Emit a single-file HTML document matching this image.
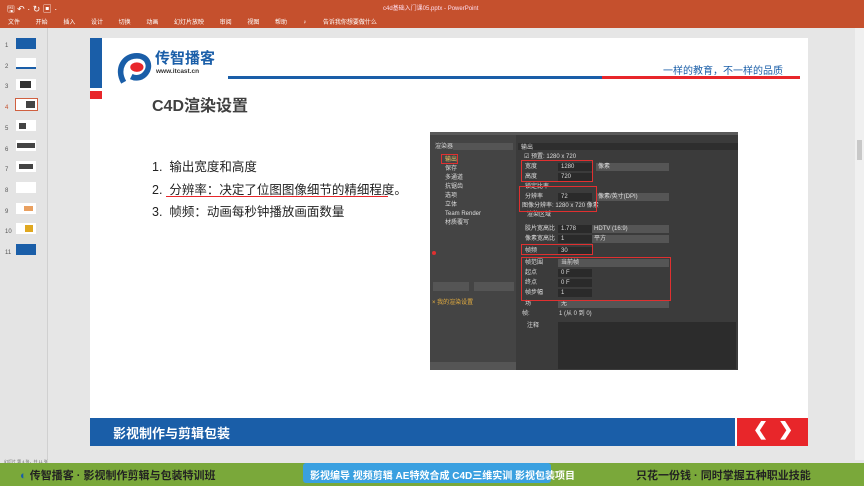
<!DOCTYPE html>
<html><head><meta charset="utf-8"><style>
*{margin:0;padding:0;box-sizing:border-box}
body{width:864px;height:486px;overflow:hidden;position:relative;background:#e6e6e6;font-family:"Liberation Sans","Noto Sans CJK SC",sans-serif}
.a{position:absolute}
.t{white-space:nowrap}
.c{position:absolute;white-space:nowrap;font-size:6px;color:#ddd;line-height:8px}
.f{position:absolute;height:8px;background:#2a2a2a}
.d{position:absolute;height:8px;background:#555}
</style></head><body>
<div class="a" style="left:0;top:0;width:864px;height:28px;background:#c5502d"></div>
<div class="a t" style="left:7px;top:2px;color:#fff;font-size:9px">🖫 ↶ · ↻ ▣ ·</div>
<div class="a t" style="left:383px;top:3px;color:#fde;font-size:6px">c4d基础入门课05.pptx - PowerPoint</div>
<div class="a t" style="left:8px;top:17px;color:#fff;font-size:6px;word-spacing:14px">文件 开始 插入 设计 切换 动画 幻灯片放映 审阅 视图 帮助 ♀ 告诉我你想要做什么</div>
<div class="a" style="left:0;top:28px;width:48px;height:432px;background:#e4e4e4;border-right:1px solid #d0d0d0"></div>
<div class="a" style="left:855px;top:28px;width:9px;height:432px;background:#f0f0f0"></div>
<div class="a" style="left:857px;top:140px;width:5px;height:20px;background:#c8c8c8"></div>
<div class="a" style="left:16px;top:38px;width:20px;height:11px;background:#1a5ea8"></div>
<div class="a" style="left:16px;top:58px;width:20px;height:11px;background:#fff;border-bottom:2px solid #1a5ea8"></div>
<div class="a" style="left:16px;top:79px;width:20px;height:11px;background:#fff"><div style="margin:2px 4px;width:11px;height:7px;background:#333"></div></div>
<div class="a" style="left:15px;top:98px;width:23px;height:13px;background:#fff;border:1px solid #d06040"><div style="margin:2px 0 0 10px;width:9px;height:7px;background:#444"></div></div>
<div class="a" style="left:16px;top:120px;width:20px;height:11px;background:#fff"><div style="margin:3px 3px;width:7px;height:6px;background:#444"></div></div>
<div class="a" style="left:16px;top:140px;width:20px;height:11px;background:#fff"><div style="margin:3px 1px;width:18px;height:5px;background:#444"></div></div>
<div class="a" style="left:16px;top:161px;width:20px;height:11px;background:#fff"><div style="margin:3px 3px;width:14px;height:5px;background:#444"></div></div>
<div class="a" style="left:16px;top:182px;width:20px;height:11px;background:#fff"></div>
<div class="a" style="left:16px;top:203px;width:20px;height:11px;background:#fff"><div style="margin:3px 0 0 8px;width:9px;height:5px;background:#e9a060"></div></div>
<div class="a" style="left:16px;top:223px;width:20px;height:11px;background:#fff"><div style="margin:2px 0 0 9px;width:8px;height:7px;background:#e0a820"></div></div>
<div class="a" style="left:16px;top:244px;width:20px;height:11px;background:#1a5ea8"></div>
<div class="a t" style="left:5px;top:36px;font-size:6px;color:#555;line-height:20.7px">1<br>2<br>3<br><span style="color:#c5502d">4</span><br>5<br>6<br>7<br>8<br>9<br>10<br>11</div>
<!-- slide -->
<div class="a" style="left:90px;top:38px;width:718px;height:408px;background:#fff"></div>
<div class="a" style="left:90px;top:38px;width:12px;height:50px;background:#1a5ea8"></div>
<div class="a" style="left:90px;top:91px;width:12px;height:8px;background:#e8262a"></div>
<svg class="a" style="left:116px;top:52px" width="38" height="34" viewBox="0 0 40 36"><path d="M8 32 C0 18 8 4 22 4 C34 4 38 16 30 24 C26 28 20 28 16 26" fill="none" stroke="#1a5ea8" stroke-width="6"/><ellipse cx="22" cy="16" rx="7" ry="5" fill="#e8262a"/></svg>
<div class="a t" style="left:155px;top:47px;font-size:15px;font-weight:bold;color:#1a5ea8">传智播客</div>
<div class="a t" style="left:156px;top:68px;font-size:6.5px;font-weight:bold;color:#333">www.itcast.cn</div>
<div class="a" style="left:228px;top:76px;width:374px;height:3px;background:#1a5ea8"></div>
<div class="a" style="left:602px;top:76px;width:198px;height:3px;background:#e8262a"></div>
<div class="a t" style="left:663px;top:62px;font-size:10px;color:#1a5ea8">一样的教育，不一样的品质</div>
<div class="a t" style="left:152px;top:92px;font-size:16px;font-weight:bold;color:#404040">C4D渲染设置</div>
<div class="a t" style="left:152px;top:156px;font-size:12.5px;color:#222;line-height:22.5px">1.&nbsp; 输出宽度和高度<br>2.&nbsp; 分辨率：决定了位图图像细节的精细程度。<br>3.&nbsp; 帧频：动画每秒钟播放画面数量</div>
<div class="a" style="left:166px;top:196px;width:222px;height:1px;background:#e8262a"></div>
<!-- c4d panel -->
<div class="a" style="left:430px;top:132px;width:308px;height:238px;background:#3b3b3b;border-top:3px solid #5a5a5a"></div>
<div class="a" style="left:430px;top:135px;width:86px;height:235px;background:#444"></div>
<div class="a" style="left:430px;top:362px;width:86px;height:8px;background:#555"></div>
<div class="a" style="left:518px;top:143px;width:220px;height:7px;background:#2e2e2e"></div>
<div class="d" style="left:453px;top:143px;width:60px;height:7px"></div>
<div class="c" style="left:435px;top:143px">渲染器</div>
<div class="c" style="left:445px;top:156px;color:#e8c060">输出</div>
<div class="c" style="left:445px;top:165px">保存</div>
<div class="c" style="left:445px;top:174px">多通道</div>
<div class="c" style="left:445px;top:183px">抗锯齿</div>
<div class="c" style="left:445px;top:192px">选项</div>
<div class="c" style="left:445px;top:201px">立体</div>
<div class="c" style="left:445px;top:210px">Team Render</div>
<div class="c" style="left:445px;top:219px">材质覆写</div>
<div class="a" style="left:441px;top:154px;width:17px;height:10px;border:1px solid #e03030"></div>
<div class="a" style="left:432px;top:251px;width:4px;height:4px;border-radius:50%;background:#e03030"></div>
<div class="a" style="left:433px;top:282px;width:36px;height:9px;background:#555"></div>
<div class="a" style="left:474px;top:282px;width:40px;height:9px;background:#555"></div>
<div class="a t" style="left:432px;top:297px;font-size:6px;color:#e8b040">× 我的渲染设置</div>
<div class="c" style="left:521px;top:144px">输出</div>
<div class="c" style="left:524px;top:153px">☑ 预置: 1280 x 720</div>
<div class="c" style="left:525px;top:163px">宽度</div><div class="f" style="left:558px;top:163px;width:34px"></div><div class="c" style="left:561px;top:163px">1280</div><div class="d" style="left:596px;top:163px;width:73px"></div><div class="c" style="left:598px;top:163px">像素</div>
<div class="c" style="left:525px;top:173px">高度</div><div class="f" style="left:558px;top:173px;width:34px"></div><div class="c" style="left:561px;top:173px">720</div>
<div class="c" style="left:525px;top:183px">锁定比率</div>
<div class="c" style="left:525px;top:193px">分辨率</div><div class="f" style="left:558px;top:193px;width:34px"></div><div class="c" style="left:561px;top:193px">72</div><div class="d" style="left:596px;top:193px;width:73px"></div><div class="c" style="left:598px;top:193px">像素/英寸(DPI)</div>
<div class="c" style="left:522px;top:202px">图像分辨率: 1280 x 720 像素</div>
<div class="c" style="left:527px;top:211px">渲染区域</div>
<div class="c" style="left:525px;top:225px">胶片宽高比</div><div class="f" style="left:558px;top:225px;width:34px"></div><div class="c" style="left:561px;top:225px">1.778</div><div class="d" style="left:592px;top:225px;width:77px"></div><div class="c" style="left:594px;top:225px">HDTV (16:9)</div>
<div class="c" style="left:525px;top:235px">像素宽高比</div><div class="f" style="left:558px;top:235px;width:34px"></div><div class="c" style="left:561px;top:235px">1</div><div class="d" style="left:592px;top:235px;width:77px"></div><div class="c" style="left:594px;top:235px">平方</div>
<div class="c" style="left:525px;top:247px">帧频</div><div class="f" style="left:558px;top:247px;width:34px"></div><div class="c" style="left:561px;top:247px">30</div>
<div class="c" style="left:525px;top:259px">帧范围</div><div class="d" style="left:558px;top:259px;width:111px"></div><div class="c" style="left:561px;top:259px">当前帧</div>
<div class="c" style="left:525px;top:269px">起点</div><div class="f" style="left:558px;top:269px;width:34px"></div><div class="c" style="left:561px;top:269px">0 F</div>
<div class="c" style="left:525px;top:279px">终点</div><div class="f" style="left:558px;top:279px;width:34px"></div><div class="c" style="left:561px;top:279px">0 F</div>
<div class="c" style="left:525px;top:289px">帧步幅</div><div class="f" style="left:558px;top:289px;width:34px"></div><div class="c" style="left:561px;top:289px">1</div>
<div class="c" style="left:525px;top:300px">场</div><div class="d" style="left:558px;top:300px;width:111px"></div><div class="c" style="left:561px;top:300px">无</div>
<div class="c" style="left:522px;top:310px">帧:</div><div class="c" style="left:559px;top:310px">1 (从 0 到 0)</div>
<div class="c" style="left:527px;top:322px">注释</div>
<div class="a" style="left:521px;top:160px;width:72px;height:22px;border:1px solid #e03030"></div>
<div class="a" style="left:519px;top:186px;width:78px;height:26px;border:1px solid #e03030"></div>
<div class="a" style="left:521px;top:244px;width:72px;height:11px;border:1px solid #e03030"></div>
<div class="a" style="left:521px;top:257px;width:150px;height:44px;border:1px solid #e03030"></div>
<div class="a" style="left:558px;top:322px;width:178px;height:47px;background:#2c2c2c"></div>
<!-- bottom bar -->
<div class="a" style="left:90px;top:418px;width:645px;height:28px;background:#1a5ea8"></div>
<div class="a t" style="left:113px;top:423px;font-size:13px;font-weight:bold;color:#fff">影视制作与剪辑包装</div>
<div class="a" style="left:737px;top:418px;width:71px;height:28px;background:#e8262a"></div>
<div class="a t" style="left:753px;top:419px;font-size:18px;font-weight:bold;color:#fff">❮&nbsp;&nbsp;❯</div>
<div class="a t" style="left:4px;top:459px;font-size:4px;color:#666">幻灯片 第 4 张，共 11 张</div>
<div class="a" style="left:0;top:463px;width:864px;height:23px;background:#7aa83a"></div>
<div class="a t" style="left:20px;top:467px;font-size:11px;font-weight:bold;color:#222"><span style="color:#1a5ea8">◐</span> 传智播客 · 影视制作剪辑与包装特训班</div>
<div class="a" style="left:303px;top:463px;width:248px;height:20px;background:#3aa0e0;border-radius:3px"></div>
<div class="a t" style="left:310px;top:467px;font-size:10px;font-weight:bold;color:#fff">影视编导 视频剪辑 AE特效合成 C4D三维实训 影视包装项目</div>
<div class="a t" style="left:636px;top:467px;font-size:11px;font-weight:bold;color:#222">只花一份钱 · 同时掌握五种职业技能</div>
</body></html>
